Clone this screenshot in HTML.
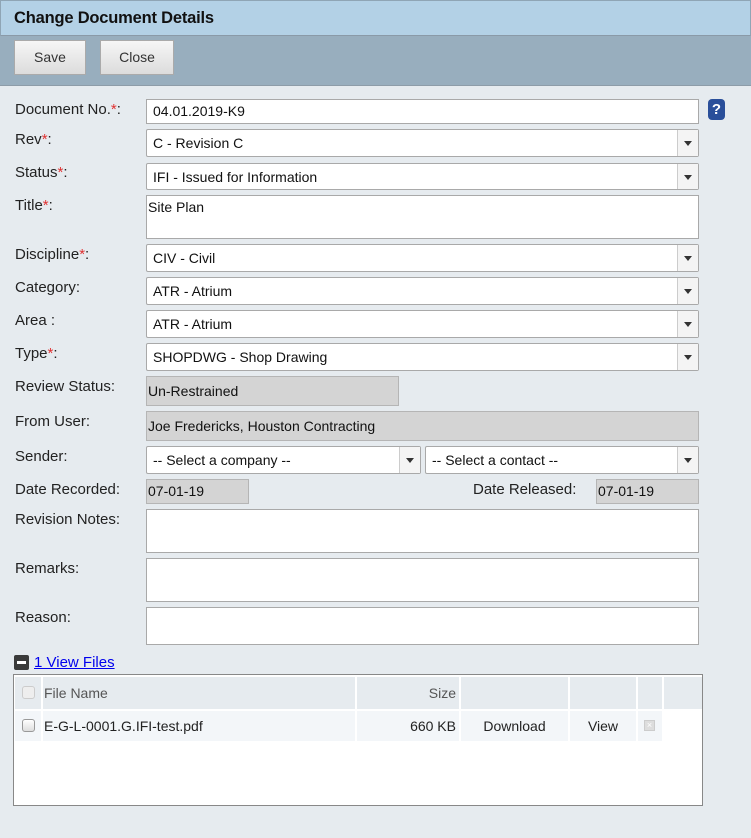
<!DOCTYPE html>
<html><head><style>
*{box-sizing:border-box;margin:0;padding:0}
body{width:751px;height:838px;background:#e6ebef;font-family:"Liberation Sans","DejaVu Sans",sans-serif;font-size:14px;color:#222;position:relative;overflow:hidden}
.a{position:absolute}
.hdr{left:0;top:0;width:751px;height:36px;background:#b3d1e6;border:1px solid #8fa5b5;border-bottom:1px solid #8a9aa8}
.hdr span{position:absolute;left:13px;top:8px;font-weight:bold;font-size:16.5px;color:#111;letter-spacing:-0.2px}
.tb{left:0;top:36px;width:751px;height:50px;background:#98aebe;border-bottom:1px solid #8d9ca8}
.btn{top:40px;height:35px;background:linear-gradient(#f6f6f6,#dcdcdc);border:1px solid #aaa;text-align:center;line-height:33px;font-size:14px;color:#333}
.lbl{left:15px;font-size:15px;color:#222}
.lbl i{color:#e03030;font-style:normal}
.in{left:146px;background:#fff;border:1px solid #a9a9a9;padding:0 6px;line-height:22px;font-size:14px;color:#111}
.dis{background:#d4d4d4;border-color:#b5b5b5}
.sel{background:#fff;border:1px solid #a9a9a9;border-radius:2px}
.sel span{position:absolute;left:6px;top:50%;transform:translateY(-50%);font-size:14px;color:#111}
.sel b{position:absolute;right:0;top:0;bottom:0;width:21px;border-left:1px solid #ccc;background:#f4f4f4}
.sel b:after{content:"";position:absolute;left:6px;top:50%;margin-top:-2px;border-left:4px solid transparent;border-right:4px solid transparent;border-top:5px solid #333}
.ta{left:146px;width:553px;background:#fff;border:1px solid #a9a9a9;padding:3px 1px;font-size:14px;color:#111}
.grid{left:13px;top:674px;width:690px;height:132px;background:#fff;border:1px solid #888}
.c{position:absolute;font-size:14px;line-height:30px}
.h{background:#e6ebef;color:#555;top:2px;height:32px;line-height:32px}
.r{background:#f3f6f9;top:36px;height:30px;color:#222}
.cb{position:absolute;width:13px;height:13px;border:1px solid #999;border-radius:3px;background:linear-gradient(#fff,#ddd)}
</style></head><body>
<div class="a hdr"><span>Change Document Details</span></div>
<div class="a tb"></div>
<div class="a btn" style="left:14px;width:72px">Save</div>
<div class="a btn" style="left:100px;width:74px">Close</div>

<div class="a lbl" style="top:101px">Document No.<i>*</i>:</div>
<div class="a in" style="top:99px;width:553px;height:25px">04.01.2019-K9</div>
<div class="a" style="left:708px;top:99px;width:17px;height:21px;background:#2a4f9a;border-radius:4px;color:#fff;font-weight:bold;font-size:15px;text-align:center;line-height:21px">?</div>

<div class="a lbl" style="top:131px">Rev<i>*</i>:</div>
<div class="a sel" style="left:146px;top:129px;width:553px;height:28px"><span>C - Revision C</span><b></b></div>
<div class="a lbl" style="top:164px">Status<i>*</i>:</div>
<div class="a sel" style="left:146px;top:163px;width:553px;height:27px"><span>IFI - Issued for Information</span><b></b></div>
<div class="a lbl" style="top:197px">Title<i>*</i>:</div>
<div class="a ta" style="top:195px;height:44px;padding-left:1px">Site Plan</div>
<div class="a lbl" style="top:246px">Discipline<i>*</i>:</div>
<div class="a sel" style="left:146px;top:244px;width:553px;height:28px"><span>CIV - Civil</span><b></b></div>
<div class="a lbl" style="top:279px">Category:</div>
<div class="a sel" style="left:146px;top:277px;width:553px;height:28px"><span>ATR - Atrium</span><b></b></div>
<div class="a lbl" style="top:312px">Area :</div>
<div class="a sel" style="left:146px;top:310px;width:553px;height:28px"><span>ATR - Atrium</span><b></b></div>
<div class="a lbl" style="top:345px">Type<i>*</i>:</div>
<div class="a sel" style="left:146px;top:343px;width:553px;height:28px"><span>SHOPDWG - Shop Drawing</span><b></b></div>
<div class="a lbl" style="top:378px">Review Status:</div>
<div class="a in dis" style="top:376px;width:253px;height:30px;line-height:28px;padding-left:1px">Un-Restrained</div>
<div class="a lbl" style="top:413px">From User:</div>
<div class="a in dis" style="top:411px;width:553px;height:30px;line-height:28px;padding-left:1px">Joe Fredericks, Houston Contracting</div>
<div class="a lbl" style="top:448px">Sender:</div>
<div class="a sel" style="left:146px;top:446px;width:275px;height:28px"><span>-- Select a company --</span><b></b></div>
<div class="a sel" style="left:425px;top:446px;width:274px;height:28px"><span>-- Select a contact --</span><b></b></div>
<div class="a lbl" style="top:481px">Date Recorded:</div>
<div class="a in dis" style="top:479px;width:103px;height:25px;padding-left:1px">07-01-19</div>
<div class="a lbl" style="left:473px;top:481px">Date Released:</div>
<div class="a in dis" style="left:596px;top:479px;width:103px;height:25px;padding-left:1px">07-01-19</div>
<div class="a lbl" style="top:511px">Revision Notes:</div>
<div class="a ta" style="top:509px;height:44px"></div>
<div class="a lbl" style="top:560px">Remarks:</div>
<div class="a ta" style="top:558px;height:44px"></div>
<div class="a lbl" style="top:609px">Reason:</div>
<div class="a ta" style="top:607px;height:38px"></div>

<div class="a" style="left:14px;top:655px;width:15px;height:15px;background:#3a3a3a;border-radius:2px"><div style="position:absolute;left:3px;top:6px;width:9px;height:3px;background:#fff"></div></div>
<div class="a" style="left:34px;top:654px;font-size:15px;color:#0000ee;text-decoration:underline">1 View Files</div>

<div class="a grid">
<div class="c h" style="left:1px;width:26px"></div><div class="cb" style="left:8px;top:11px;border-color:#ccc;background:#eee"></div>
<div class="c h" style="left:29px;width:312px;padding-left:1px">File Name</div>
<div class="c h" style="left:343px;width:102px;text-align:right;padding-right:3px">Size</div>
<div class="c h" style="left:447px;width:107px"></div>
<div class="c h" style="left:556px;width:66px"></div>
<div class="c h" style="left:624px;width:24px"></div>
<div class="c h" style="left:650px;width:38px"></div>
<div class="c r" style="left:1px;width:26px"></div><div class="cb" style="left:8px;top:44px"></div>
<div class="c r" style="left:29px;width:312px;padding-left:1px">E-G-L-0001.G.IFI-test.pdf</div>
<div class="c r" style="left:343px;width:102px;text-align:right;padding-right:3px">660 KB</div>
<div class="c r" style="left:447px;width:107px;text-align:center">Download</div>
<div class="c r" style="left:556px;width:66px;text-align:center">View</div>
<div class="c r" style="left:624px;width:24px"></div>
<div class="a" style="left:630px;top:45px;width:11px;height:11px;background:#ddd;border:1px solid #ccc;color:#fff;font-size:9px;line-height:9px;text-align:center">×</div>
</div>
</body></html>
